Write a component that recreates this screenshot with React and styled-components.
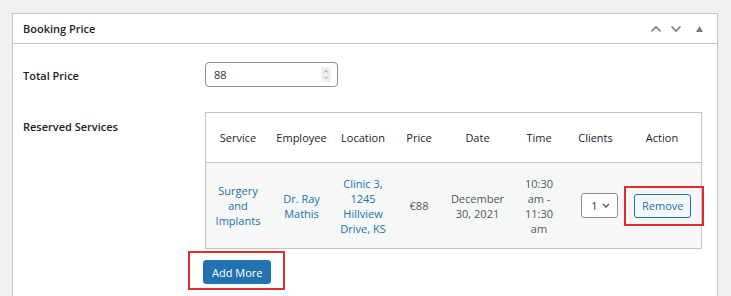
import React from "react";
import styled, { createGlobalStyle } from "styled-components";

const GlobalStyle = createGlobalStyle`
  body {
    margin: 0;
    background: #f0f0f1;
    font-family: "Open Sans", "Liberation Sans", sans-serif;
    font-size: 11px;
    color: #1d2327;
  }
`;

const Page = styled.div`
  height: 296px;
  overflow: hidden;
  padding: 13px 0 0 12px;
`;

const Panel = styled.div`
  width: 704px;
  height: 300px;
  background: #fff;
  border: 1px solid #c3c4c7;
`;

const PanelHeader = styled.div`
  display: flex;
  align-items: center;
  height: 29px;
  padding: 0 8px 0 10px;
  border-bottom: 1px solid #c3c4c7;
`;

const PanelTitle = styled.h2`
  flex: 1;
  margin: 0;
  font-size: 11px;
  font-weight: 600;
  color: #1d2327;
`;

const HandleButtons = styled.div`
  display: flex;
  align-items: center;
  gap: 6px;
  color: #787c82;
`;

const IconBtn = styled.span`
  display: flex;
  width: ${(p) => p.$w || 14}px;
  justify-content: center;
`;

const FormGrid = styled.div`
  display: grid;
  grid-template-columns: 182px 1fr;
  padding: 18px 0 0 10px;
  row-gap: 25px;
  align-items: start;
`;

const Label = styled.div`
  font-weight: 600;
  line-height: 15px;
  padding-top: ${(p) => p.$top || 0}px;
`;

const NumberBox = styled.div`
  box-sizing: border-box;
  width: 133px;
  height: 25px;
  border: 1px solid #8c8f94;
  border-radius: 4px;
  display: flex;
  align-items: center;
  padding: 0 6px 0 8px;
  justify-content: space-between;
  color: #2c3338;
`;

const Spinner = styled.span`
  display: flex;
  width: 10px;
  height: 15px;
  background: #f0f0f1;
  border-radius: 2px;
  align-items: center;
  justify-content: center;
`;

const Table = styled.table`
  width: 495px;
  table-layout: fixed;
  border-collapse: collapse;
  border: 1px solid #c3c4c7;
`;

const Th = styled.th`
  width: ${(p) => p.$w}px;
  height: 49px;
  font-weight: 400;
  font-size: 11px;
  color: #1d2327;
  text-align: center;
  border-bottom: 1px solid #c3c4c7;
  padding: 0;
`;

const Td = styled.td`
  height: 85px;
  background: #f6f7f7;
  text-align: center;
  vertical-align: middle;
  line-height: 15px;
  padding: 0 ${(p) => (p.$pad !== undefined ? p.$pad : 4)}px;
  color: ${(p) => (p.$link ? "#2271b1" : "#50575e")};
`;

const SelectBox = styled.div`
  box-sizing: border-box;
  display: inline-flex;
  align-items: center;
  justify-content: center;
  gap: 4px;
  width: 37px;
  height: 25px;
  margin-left: 8px;
  background: #fff;
  border: 1px solid #8c8f94;
  border-radius: 3px;
  color: #2c3338;
  padding-left: 2px;
`;

const Highlight = styled.div`
  display: inline-flex;
  border: 2px solid #e32a2f;
  padding: ${(p) => p.$pad};
  margin: ${(p) => p.$margin || 0};
`;

const Button = styled.button`
  box-sizing: border-box;
  height: 24px;
  padding: 0 ${(p) => (p.$primary ? 8 : 7)}px;
  font-family: inherit;
  font-size: 11px;
  border-radius: 3px;
  border: 1px solid #2271b1;
  background: ${(p) => (p.$primary ? "#2271b1" : "#f6f7f7")};
  color: ${(p) => (p.$primary ? "#fff" : "#2271b1")};
`;

const FieldStack = styled.div`
  display: flex;
  flex-direction: column;
  align-items: flex-start;
`;

const Chevron = ({ up }) => (
  <svg width="12" height="8" viewBox="0 0 12 8" fill="none" stroke="currentColor" strokeWidth="1.6">
    <path d={up ? "M1.5 6.5 6 2l4.5 4.5" : "M1.5 1.5 6 6l4.5-4.5"} />
  </svg>
);

const columns = [
  ["Service", 64],
  ["Employee", 63],
  ["Location", 60],
  ["Price", 52],
  ["Date", 65],
  ["Time", 58],
  ["Clients", 55],
  ["Action", 78],
];

export default function App() {
  return (
    <Page>
      <GlobalStyle />
      <Panel>
        <PanelHeader>
          <PanelTitle>Booking Price</PanelTitle>
          <HandleButtons>
            <IconBtn><Chevron up /></IconBtn>
            <IconBtn><Chevron /></IconBtn>
            <IconBtn $w={20}>
              <svg width="7" height="6" viewBox="0 0 7 6">
                <path d="M3.5 0 7 6H0z" fill="currentColor" />
              </svg>
            </IconBtn>
          </HandleButtons>
        </PanelHeader>
        <FormGrid>
          <Label $top={6}>Total Price</Label>
          <NumberBox>
            <span>88</span>
            <Spinner>
              <svg width="6" height="11" viewBox="0 0 6 11" fill="none" stroke="#8c8f94" strokeWidth="0.9">
                <path d="M1 3.5 3 1.5l2 2M1 7.5l2 2 2-2" />
              </svg>
            </Spinner>
          </NumberBox>
          <Label $top={7}>Reserved Services</Label>
          <FieldStack>
            <Table>
              <thead>
                <tr>
                  {columns.map(([name, w]) => (
                    <Th key={name} $w={w}>{name}</Th>
                  ))}
                </tr>
              </thead>
              <tbody>
                <tr>
                  <Td $link>Surgery and Implants</Td>
                  <Td $link>Dr. Ray Mathis</Td>
                  <Td $link>Clinic 3, 1245 Hillview Drive, KS</Td>
                  <Td>€88</Td>
                  <Td>December 30, 2021</Td>
                  <Td $pad={14}>10:30 am - 11:30 am</Td>
                  <Td>
                    <SelectBox>
                      1
                      <svg width="8" height="5" viewBox="0 0 8 5" fill="none" stroke="#50575e" strokeWidth="1.3">
                        <path d="M1 1l3 3 3-3" />
                      </svg>
                    </SelectBox>
                  </Td>
                  <Td $pad={0}>
                    <Highlight $pad="6px 11px 6px 8px" $margin="0 0 0 1px">
                      <Button>Remove</Button>
                    </Highlight>
                  </Td>
                </tr>
              </tbody>
            </Table>
            <Highlight $pad="7px 12px 4px 13px" $margin="2px 0 0 -17px">
              <Button $primary>Add More</Button>
            </Highlight>
          </FieldStack>
        </FormGrid>
      </Panel>
    </Page>
  );
}
